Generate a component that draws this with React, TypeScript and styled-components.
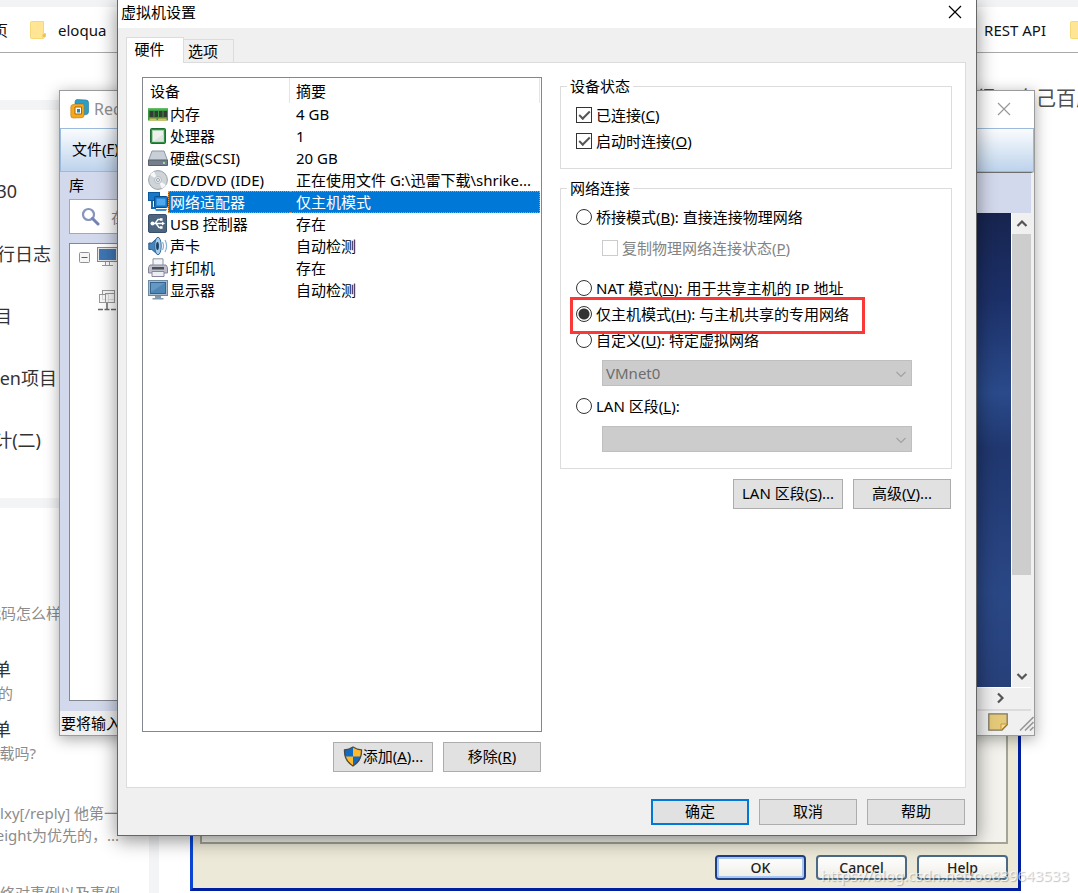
import React from "react";
import styled, { createGlobalStyle, css } from "styled-components";

const GlobalStyle = createGlobalStyle`
  *, *::before, *::after { box-sizing: border-box; }
  body { margin: 0; background: #fff; }
  body, button, input, select {
    font-family: "Noto Sans", "Noto Sans CJK SC", sans-serif;
    font-size: 15px;
    color: #000;
  }
`;

/* ---------- desktop and the web page at the back ---------- */

const Desktop = styled.main`
  position: relative;
  height: 100vh;
  min-height: 836px;
  overflow: hidden;
  display: flex;
  flex-direction: column;
`;

const BookmarkBar = styled.nav`
  flex: none;
  display: flex;
  justify-content: space-between;
  align-items: center;
  height: 53px;
  padding-top: 6px;
  padding-bottom: 6px;
  border-top: 7px solid #f1f3f4;
  border-bottom: 1px solid #a9a9a9;
  background: #fff;
`;

const BookmarkGroup = styled.div<{ $end?: boolean }>`
  display: flex;
  align-items: center;
  gap: ${(p) => (p.$end ? 24 : 22)}px;
  margin: ${(p) => (p.$end ? "0 -8px 0 0" : "0 0 0 -7px")};
`;

const Bookmark = styled.a`
  display: flex;
  align-items: center;
  gap: 12px;
  line-height: 20px;
  color: #111;
  text-decoration: none;
  white-space: nowrap;
`;

const WebPage = styled.div`
  flex: 1;
  min-height: 0;
  display: flex;
`;

const Sidebar = styled.aside`
  flex: none;
  width: 159px;
  border-right: 10px solid #f3f4f6;
  overflow: hidden;
`;

const SideCard = styled.section<{ $pad: number }>`
  padding-top: ${(p) => p.$pad}px;
  border-top: 10px solid #f3f4f6;
  &:first-child { margin-top: 47px; }
`;

const SideLink = styled.a<{ $end: number }>`
  display: flex;
  justify-content: flex-end;
  align-items: center;
  width: ${(p) => p.$end}px;
  height: 62px;
  font-size: 18px;
  color: #333;
  text-decoration: none;
  white-space: nowrap;
`;

const Comment = styled.div<{ $gap?: number }>`
  padding-bottom: ${(p) => p.$gap ?? 12}px;
`;

const CommentLine = styled.p<{ $end: number; $title?: boolean }>`
  display: flex;
  justify-content: flex-end;
  margin: 0;
  width: ${(p) => p.$end}px;
  line-height: ${(p) => (p.$title ? 26 : 22)}px;
  font-size: ${(p) => (p.$title ? 18 : 15)}px;
  color: ${(p) => (p.$title ? "#333" : "#8c8c8c")};
  white-space: nowrap;
`;

const Article = styled.article`
  flex: 1;
  min-width: 0;
  display: flex;
  flex-direction: column;
  padding: 31px 57px 2px 31px;
`;

const ArticleText = styled.p`
  align-self: flex-end;
  margin: 0 -75px 0 0;
  line-height: 30px;
  font-size: 20px;
  color: #4f4f4f;
  white-space: nowrap;
`;

const OldDialog = styled.div`
  flex: 1;
  display: flex;
  flex-direction: column;
  margin-top: 20px;
  padding: 0 10px 8px 7px;
  border: 3px solid #001ea0;
  border-color: #0a3cc8 #001ea0 #001ea0 #0a46d2;
  background: #ece9d8;
`;

const OldPanel = styled.div`
  flex: 1;
  border: 2px solid #a3a397;
  border-top: 0;
  background: #f3f2ec;
`;

const OldButtons = styled.div`
  display: flex;
  justify-content: flex-end;
  gap: 10px;
  padding-top: 11px;
`;

const OldButton = styled.button<{ $primary?: boolean }>`
  width: 91px;
  height: 25px;
  padding: 0;
  border: 2px solid ${(p) => (p.$primary ? "#1f3f86" : "#4c6a85")};
  border-radius: 4px;
  background: linear-gradient(#fff, #eeede6);
  box-shadow: ${(p) => (p.$primary ? "inset 0 0 0 2px #a9c6f3" : "none")};
  font: 500 14px/18px "Noto Sans", sans-serif;
  color: #222;
`;

const Watermark = styled.span`
  position: absolute;
  right: 9px;
  bottom: 7px;
  font-size: 15px;
  line-height: 22px;
  color: rgba(255, 255, 255, 0.7);
  text-shadow: 1px 1px 1px rgba(0, 0, 0, 0.25);
`;

/* ---------- virtual machine window ---------- */

const VmWindow = styled.section`
  position: absolute;
  top: 90px;
  left: 59px;
  right: 43px;
  display: flex;
  flex-direction: column;
  border: 1px solid #9b9b9b;
  background: #f0f0f0;
  box-shadow: 0 3px 14px rgba(0, 0, 0, 0.35);
`;

const VmTitle = styled.header`
  display: flex;
  align-items: center;
  gap: 5px;
  height: 37px;
  padding: 0 23px 2px 10px;
  background: #fff;
  font-size: 16px;
  color: #8f8f8f;
`;

const PlainButton = styled.button`
  display: flex;
  padding: 0;
  border: 0;
  background: none;
`;

const Grow = styled.span`
  flex: 1;
`;

const VmMenu = styled.div`
  display: flex;
  align-items: center;
  height: 44px;
  padding: 0 0 4px 11px;
  border: 1px solid #9cbbdc;
  background: linear-gradient(#fafcfe, #bdd3ec);
`;

const VmBody = styled.div`
  display: flex;
  height: 539px;
  background: #d3d9ec;
`;

const Library = styled.div`
  flex: none;
  display: flex;
  flex-direction: column;
  width: 200px;
  padding: 0 0 10px 9px;
`;

const LibraryTitle = styled.h2`
  margin: 0;
  height: 27px;
  font-size: 15px;
  line-height: 26px;
  font-weight: 400;
`;

const SearchBox = styled.label`
  display: flex;
  align-items: center;
  gap: 11px;
  height: 35px;
  padding-left: 11px;
  border: 1px solid #a5a8b3;
  background: #fff;
  input {
    flex: 1;
    min-width: 0;
    padding: 0;
    border: 0;
    outline: 0;
  }
  input::placeholder { color: #8a8a8a; }
`;

const Tree = styled.ul`
  flex: 1;
  margin: 9px 0 0;
  padding: 2px 0 0 9px;
  list-style: none;
  border: 1px solid #828790;
  background: #fff;
  li {
    display: flex;
    align-items: center;
    gap: 7px;
    height: 22px;
  }
  li + li {
    margin-top: 21px;
    padding-left: 19px;
  }
`;

const Screen = styled.div`
  flex: 1;
  display: flex;
  flex-direction: column;
  border-top: 1px solid #6e6e6e;
  border-right: 3px solid #f0f0f0;
`;

const ScreenRow = styled.div`
  flex: 1;
  display: flex;
  margin-top: 40px;
`;

const GuestDisplay = styled.div`
  flex: 1;
  border-right: 1px solid #fff;
  background: linear-gradient(#17244f 0, #1c3068 18%, #2a4a8a 38%, #20376f 50%, #2a4785 80%, #27407a 100%);
`;

const VScroll = styled.div`
  display: flex;
  flex-direction: column;
  align-items: center;
  justify-content: space-between;
  width: 19px;
  padding: 5px 0;
  background: #f0f0f0;
`;

const Thumb = styled.div`
  width: 19px;
  height: 341px;
  margin: 4px 0 auto;
  background: #cdcdcd;
`;

const HScroll = styled.div`
  display: flex;
  justify-content: flex-end;
  align-items: center;
  height: 24px;
  padding: 0 25px 2px 0;
  border-top: 1px solid #fff;
  border-bottom: 2px solid #dcdcdc;
  background: #f0f0f0;
`;

const VmStatus = styled.footer`
  display: flex;
  align-items: center;
  justify-content: space-between;
  height: 24px;
  padding: 0 0 2px 1px;
`;

const StatusIcons = styled.div`
  display: flex;
  align-items: flex-end;
  gap: 11px;
`;

/* ---------- settings dialog ---------- */

const Dialog = styled.section`
  position: absolute;
  top: 0;
  left: 117px;
  right: 101px;
  display: flex;
  flex-direction: column;
  border: 1px solid #666;
  border-top: 0;
  background: #f0f0f0;
  box-shadow: 0 4px 18px rgba(0, 0, 0, 0.45);
`;

const DialogTitle = styled.header`
  display: flex;
  align-items: center;
  justify-content: space-between;
  height: 28px;
  padding: 0 14px 5px 3px;
  background: #fff;
  h1 {
    margin: 0;
    font-size: 15px;
    line-height: 22px;
    font-weight: 400;
  }
`;

const TabStrip = styled.div`
  display: flex;
  align-items: flex-end;
  height: 34px;
  padding-left: 8px;
`;

const Tab = styled.button<{ $active?: boolean }>`
  padding: 0 11px 1px 0;
  border: 1px solid #dcdcdc;
  border-bottom: 0;
  line-height: 20px;
  ${(p) =>
    p.$active
      ? css`
          z-index: 1;
          width: 58px;
          height: 26px;
          margin-bottom: -1px;
          padding-bottom: 4px;
          background: #fff;
        `
      : css`
          width: 50px;
          height: 23px;
          border-left: 0;
          background: #f0f0f0;
        `}
`;

const TabPanel = styled.div`
  display: flex;
  gap: 18px;
  margin: 0 10px 0 8px;
  padding: 14px 13px 15px 15px;
  border: 1px solid #dcdcdc;
  background: #fff;
`;

const DeviceColumn = styled.div`
  flex: 400 1 0;
  min-width: 0;
`;

const OptionColumn = styled.div`
  flex: 392 1 0;
  min-width: 0;
`;

const DeviceList = styled.div`
  min-height: 655px;
  padding-right: 1px;
  border: 1px solid #828790;
  background: #fff;
`;

const DeviceTable = styled.table`
  width: 100%;
  table-layout: fixed;
  border-collapse: separate;
  border-spacing: 0;
  th {
    height: 25px;
    padding: 1px 0 0 7px;
    border-right: 1px solid #e5e5e5;
    font-weight: 400;
    text-align: left;
    line-height: 24px;
  }
  th + th { padding-left: 6px; }
`;

const DeviceRow = styled.tr<{ $selected?: boolean }>`
  color: ${(p) => (p.$selected ? "#fff" : "#000")};
  td {
    height: 22px;
    padding: 0;
    line-height: 20px;
    white-space: nowrap;
    overflow: hidden;
    border: 0 solid transparent;
    border-width: 1px 0;
  }
  td:first-child {
    padding: 0 0 0 5px;
    border-width: 0;
  }
  td:first-child svg { display: block; }
  td:nth-child(2) { padding-left: 2px; }
  td:nth-child(3) { padding-left: 6px; }
  ${(p) =>
    p.$selected &&
    css`
      td:not(:first-child) {
        background: #0078d7;
        border-color: #f09030;
        border-style: dotted;
      }
      td:nth-child(2) { border-left-width: 1px; padding-left: 1px; }
      td:nth-child(3) { border-right-width: 1px; }
    `}
`;

const ButtonRow = styled.div`
  display: flex;
  justify-content: flex-end;
  gap: 10px;
  padding: 10px 1px 0 0;
`;

const DialogFooter = styled.footer`
  display: flex;
  justify-content: flex-end;
  gap: 10px;
  padding: 11px 11px 10px;
`;

const Button = styled.button<{ $width?: number; $primary?: boolean; $short?: boolean }>`
  display: flex;
  align-items: center;
  justify-content: center;
  width: ${(p) => p.$width ?? 98}px;
  height: ${(p) => (p.$short ? 26 : 30)}px;
  padding: 0 0 2px;
  border: ${(p) => (p.$primary ? "2px solid #0078d7" : "1px solid #adadad")};
  background: #e1e1e1;
  line-height: 20px;
  white-space: nowrap;
`;

const Group = styled.fieldset`
  min-width: 0;
  margin: 0;
  padding: 7px 15px 14px;
  border: 1px solid #dcdcdc;
  & + & { margin-top: 10px; padding-bottom: 16px; }
  legend {
    margin-left: -9px;
    padding: 0 3px;
    line-height: 18px;
  }
`;

const Choice = styled.label<{ $marked?: boolean; $disabled?: boolean }>`
  position: relative;
  display: flex;
  align-items: center;
  gap: 4px;
  width: max-content;
  height: 26px;
  white-space: nowrap;
  color: ${(p) => (p.$disabled ? "#838383" : "#000")};
  span { padding-bottom: 2px; }
  ${(p) =>
    p.$disabled &&
    css`
      margin: 5px 0 14px 26px;
    `}
  ${(p) =>
    p.$marked &&
    css`
      z-index: 1;
      &::after {
        content: "";
        position: absolute;
        inset: -4px -16px -7px -6px;
        border: 3px solid #fa3838;
      }
    `}
`;

const CheckBox = styled.input`
  appearance: none;
  display: grid;
  place-items: center;
  width: 16px;
  height: 16px;
  margin: 0;
  border: 1px solid #333;
  background: #fff;
  &:checked::after {
    content: "";
    width: 11px;
    height: 6px;
    margin-bottom: 3px;
    border: solid #555;
    border-width: 0 0 2px 2px;
    transform: rotate(-45deg);
  }
  &:disabled { border-color: #ccc; }
`;

const Radio = styled.input`
  appearance: none;
  width: 16px;
  height: 16px;
  margin: 0;
  border: 1px solid #333;
  border-radius: 50%;
  background: #fff;
  &:checked { background: radial-gradient(circle, #333 5px, #fff 6px); }
`;

const SelectBox = styled.div`
  position: relative;
  margin: 7px 24px 7px 26px;
  &:last-child { margin-bottom: 0; }
  select {
    display: block;
    appearance: none;
    width: 100%;
    height: 26px;
    padding: 0 3px;
    border: 1px solid #bfbfbf;
    border-radius: 0;
    background: #ccc;
    color: #6d6d6d;
    opacity: 1;
  }
  svg {
    position: absolute;
    top: 8px;
    right: 5px;
  }
`;

/* ---------- icons ---------- */

const Folder = () => (
  <svg width="16" height="18" viewBox="0 0 16 18">
    <path d="M1.5.5h12v12h2v3l-2 2h-12a1 1 0 0 1-1-1v-15a1 1 0 0 1 1-1z" fill="#ffe594" stroke="#f5d877" />
    <path d="M12.500 16.500v-3l3-1v3z" fill="#edc24f" />
  </svg>
);

const Cross = ({ color = "#000" }: { color?: string }) => (
  <svg width="14" height="14" viewBox="0 0 14 14">
    <path d="M1 1l12 12M13 1L1 13" stroke={color} strokeWidth="1.2" fill="none" />
  </svg>
);

const Chevron = ({ turn, thin }: { turn: number; thin?: boolean }) => (
  <svg width={12} height={12} viewBox="0 0 12 12">
    <path
      d="M1.500 4L6 8.500 10.500 4"
      transform={`rotate(${turn} 6 6)`}
      stroke={thin ? "#a0a0a0" : "#555"}
      strokeWidth={thin ? 1.1 : 2.2}
      fill="none"
    />
  </svg>
);

const VmLogo = () => (
  <svg width="19" height="20" viewBox="0 0 19 20">
    <path d="M5 3q0-2.500 2-2.500L16 1q2.500 0 2.500 2.500V13q0 2-2 2.500l-3 .5V5H5z" fill="#2e9dc4" stroke="#1c7799" strokeWidth=".6" />
    <path d="M3 5.500l9-.5q2 0 2 2v9.500q0 2-2 2.200L3 19Q.8 19 .8 16.500V8Q.8 5.800 3 5.500z" fill="#f5a81c" stroke="#b8740c" strokeWidth=".6" />
    <path d="M5 8h6.500v7H5z" fill="#fff" stroke="#a3680b" />
    <path d="M7 10h3v3.500H7z" fill="#2583a8" />
  </svg>
);

const SearchIcon = () => (
  <svg width="19" height="19" viewBox="0 0 19 19">
    <circle cx="7.500" cy="7.500" r="5.500" fill="none" stroke="#8593bd" strokeWidth="2.200" />
    <path d="M11.500 11.500l5.500 5.500" stroke="#7483b3" strokeWidth="3" strokeLinecap="round" />
  </svg>
);

const MinusBox = () => (
  <svg width="11" height="11" viewBox="0 0 11 11">
    <rect x=".5" y=".5" width="10" height="10" rx="1" fill="#f6f6f6" stroke="#919191" />
    <path d="M2.500 5.500h6" stroke="#3f5fa8" />
  </svg>
);

const TreeMonitor = () => (
  <svg width="22" height="20" viewBox="0 0 22 20">
    <rect x=".5" y=".5" width="20" height="14" fill="#e8e8e8" stroke="#888" />
    <rect x="2" y="2" width="17" height="11" fill="#3f76b5" />
    <path d="M8.500 15v3M12.500 15v3M5 18.500h11" stroke="#999" fill="none" />
  </svg>
);

const TreeNetwork = () => (
  <svg width="20" height="22" viewBox="0 0 20 22">
    <g fill="#fafafa" fillOpacity=".7" stroke="#999">
      <rect x="4.500" y="1.500" width="12" height="9" />
      <rect x="1.500" y="5.500" width="9" height="8" />
      <rect x="7.500" y="4.500" width="9" height="9" />
    </g>
    <path d="M9 14v6M0 20.500h5M6.500 20.500h5M13 20.500h5" stroke="#666" strokeWidth="1.500" fill="none" />
  </svg>
);

const Note = () => (
  <svg width="20" height="18" viewBox="0 0 20 18">
    <path d="M.8.8h18.400v11L14 17.200H.8z" fill="#e5c97a" stroke="#7d7864" strokeWidth="1.300" />
    <path d="M13 17v-6h6z" fill="#f4dc9a" stroke="#c49738" />
  </svg>
);

const Grip = () => (
  <svg width="15" height="15" viewBox="0 0 15 15">
    <path d="M1 14.500L14.500 1M6 14.500L14.500 6M11 14.500l3.500-3.500" stroke="#999" strokeWidth="1.600" />
  </svg>
);

const Shield = () => (
  <svg width="20" height="21" viewBox="0 0 20 21">
    <path d="M10 1Q6 3.500 1.500 3.800 1 14.500 10 20z" fill="#0f6cc4" />
    <path d="M10 1q4 2.500 8.500 2.800Q19 14.500 10 20z" fill="#ffb92b" />
    <path d="M10 10.500H2Q3.500 16.500 10 20z" fill="#ffb92b" />
    <path d="M10 10.500h8Q16.500 16.500 10 20z" fill="#0f6cc4" />
    <path d="M10 1q4 2.500 8.500 2.800Q19 14.500 10 20 1 14.500 1.500 3.800 6 3.500 10 1z" fill="none" stroke="#4b4b4b" strokeWidth="1.300" />
  </svg>
);

type DeviceKind = "ram" | "cpu" | "disk" | "cd" | "net" | "usb" | "sound" | "printer" | "display";

const deviceArt: Record<DeviceKind, React.ReactNode> = {
  ram: (
    <>
      <path d="M0 4h20v12.500H0z" fill="#3d9a45" />
      <path d="M0 4h20v1.500H0z" fill="#67bd6a" />
      <path d="M1.500 7h4v6h-4zM6.500 7H10v6H6.500zM11 7h3.500v6H11zM15.500 7h3.500v6h-3.500z" fill="#333c35" />
      <path d="M1.500 15.500h7M10 15.500h8.500" stroke="#f0b64d" strokeWidth="1.800" />
    </>
  ),
  cpu: (
    <>
      <rect x="2.500" y="2.500" width="15" height="15" rx="1" fill="#2f8f42" stroke="#1f6e31" />
      <rect x="4.500" y="4.500" width="11" height="11" fill="#eef0ee" stroke="#a9d3ae" />
      <path d="M5 15.500h10.500V8z" fill="#dfe3e0" />
    </>
  ),
  disk: (
    <>
      <path d="M4 3h12l3.500 9.500H.5z" fill="#c9cfd7" stroke="#8e98a4" />
      <path d="M.5 12h19v5.500H.5z" fill="#737f8c" stroke="#55606b" />
      <path d="M15 15h2" stroke="#b6f5b6" strokeWidth="1.500" />
    </>
  ),
  cd: (
    <>
      <circle cx="10" cy="10" r="9.400" fill="#cfd4d9" stroke="#9aa2aa" />
      <path d="M10 10L2 5a9.400 9.400 0 0 1 4-3.500zM10 10l8 5a9.400 9.400 0 0 1-4 3.500z" fill="#f6f8fa" />
      <circle cx="10" cy="10" r="3.500" fill="#e9ecef" stroke="#b5bcc4" />
      <circle cx="10" cy="10" r="1.500" fill="#fff" stroke="#98a2ac" />
    </>
  ),
  net: (
    <>
      <rect x=".5" y=".5" width="11" height="8" fill="#1a78c8" stroke="#0b5a9e" />
      <path d="M4 9v7h4" fill="none" stroke="#1a6bb0" strokeWidth="2" />
      <rect x="6.500" y="4.500" width="13" height="11" rx="1" fill="#1372c4" stroke="#084f91" />
      <rect x="8.500" y="6.500" width="9" height="7" fill="#4da8ec" />
      <path d="M7 17h12l-1 2H8z" fill="#3d8fd0" />
    </>
  ),
  usb: (
    <>
      <rect x=".5" y=".5" width="18" height="18" rx="1.500" fill="#4c6580" stroke="#38506a" />
      <path d="M4 9.500h11M7 9.500l3-4h3M8 9.500l3 4h2" fill="none" stroke="#fff" strokeWidth="1.300" />
      <circle cx="4.500" cy="9.500" r="2" fill="#fff" />
      <path d="M14 7.500l3 2-3 2zM12 4.200h2.600v2.600H12zM12 12.200h2.600v2.600H12z" fill="#fff" />
    </>
  ),
  sound: (
    <>
      <path d="M.8 7h3L10 1.200v17.600L3.800 13.500h-3z" fill="#4585bd" stroke="#2d5f8d" />
      <ellipse cx="10" cy="10" rx="3.200" ry="8.800" fill="#a7cdea" stroke="#3a6d9b" />
      <ellipse cx="9.500" cy="10" rx="1.400" ry="4" fill="#1d3f66" />
      <path d="M14.500 6q2 4 0 8M17 4q3.200 6 0 12" fill="none" stroke="#8bb0d1" strokeWidth="1.200" />
    </>
  ),
  printer: (
    <>
      <path d="M5 .8h10V8H5z" fill="#f3f5f8" stroke="#8e949d" />
      <path d="M2 7h16l1.500 2.500V15H.5V9.500z" fill="#bdbfcb" stroke="#84879a" />
      <path d="M4 9h12v2.500H4z" fill="#4d4f5a" />
      <path d="M4 13.500h12v5H4z" fill="#eceef4" stroke="#85889c" />
    </>
  ),
  display: (
    <>
      <rect x=".5" y=".5" width="19" height="15" fill="#a9bccb" stroke="#6d8aa3" />
      <rect x="2.500" y="2.500" width="15" height="11" fill="#4f86b6" stroke="#35648f" />
      <path d="M3 3h14L3 12z" fill="#6598c3" />
      <path d="M7 16h6v2H7zM4.500 18h11v1.500h-11z" fill="#8298ab" />
    </>
  ),
};

const DeviceIcon = ({ kind }: { kind: DeviceKind }) => (
  <svg width="20" height="20" viewBox="0 0 20 20">{deviceArt[kind]}</svg>
);

/* ---------- data ---------- */

const devices: { kind: DeviceKind; name: string; summary: string }[] = [
  { kind: "ram", name: "内存", summary: "4 GB" },
  { kind: "cpu", name: "处理器", summary: "1" },
  { kind: "disk", name: "硬盘(SCSI)", summary: "20 GB" },
  { kind: "cd", name: "CD/DVD (IDE)", summary: "正在使用文件 G:\\迅雷下载\\shrike..." },
  { kind: "net", name: "网络适配器", summary: "仅主机模式" },
  { kind: "usb", name: "USB 控制器", summary: "存在" },
  { kind: "sound", name: "声卡", summary: "自动检测" },
  { kind: "printer", name: "打印机", summary: "存在" },
  { kind: "display", name: "显示器", summary: "自动检测" },
];

const sideLinks = [
  { text: "30", end: 17 },
  { text: "行日志", end: 51 },
  { text: "目", end: 12 },
  { text: "ven项目", end: 57 },
  { text: "计(二)", end: 41 },
];

export default function App() {
  return (
    <>
      <GlobalStyle />
      <Desktop>
        <BookmarkBar>
          <BookmarkGroup>
            <Bookmark href="#">页</Bookmark>
            <Bookmark href="#"><Folder />eloqua</Bookmark>
          </BookmarkGroup>
          <BookmarkGroup $end>
            <Bookmark href="#">REST API</Bookmark>
            <Bookmark href="#" aria-label="folder"><Folder /></Bookmark>
          </BookmarkGroup>
        </BookmarkBar>

        <WebPage>
          <Sidebar>
            <SideCard $pad={50}>
              <Comment $gap={28}>
                {sideLinks.map((l) => (
                  <SideLink key={l.text} href="#" $end={l.end}>{l.text}</SideLink>
                ))}
              </Comment>
            </SideCard>
            <SideCard $pad={94}>
              <Comment $gap={32}>
                <CommentLine $end={61}>代码怎么样</CommentLine>
              </Comment>
              <Comment>
                <CommentLine $title $end={11}>单</CommentLine>
                <CommentLine $end={13}>的</CommentLine>
              </Comment>
              <Comment $gap={38}>
                <CommentLine $title $end={11}>单</CommentLine>
                <CommentLine $end={36}>载吗?</CommentLine>
              </Comment>
              <Comment $gap={36}>
                <CommentLine $end={119}>lxy[/reply] 他第一</CommentLine>
                <CommentLine $end={119}>eight为优先的，...</CommentLine>
              </Comment>
              <CommentLine $end={120}>络对事例以及事例</CommentLine>
            </SideCard>
          </Sidebar>
          <Article>
            <ArticleText>得、自己百度</ArticleText>
            <OldDialog>
              <OldPanel />
              <OldButtons>
                <OldButton $primary>OK</OldButton>
                <OldButton>Cancel</OldButton>
                <OldButton>Help</OldButton>
              </OldButtons>
            </OldDialog>
          </Article>
        </WebPage>

        <VmWindow>
          <VmTitle>
            <VmLogo />Red
            <Grow />
            <PlainButton aria-label="close window"><Cross color="#999" /></PlainButton>
          </VmTitle>
          <VmMenu>
            <PlainButton>文件(<u>F</u>)</PlainButton>
          </VmMenu>
          <VmBody>
            <Library>
              <LibraryTitle>库</LibraryTitle>
              <SearchBox>
                <SearchIcon />
                <input type="text" placeholder="在" aria-label="search" />
              </SearchBox>
              <Tree>
                <li><MinusBox /><TreeMonitor /></li>
                <li><TreeNetwork /></li>
              </Tree>
            </Library>
            <Screen>
              <ScreenRow>
                <GuestDisplay />
                <VScroll>
                  <Chevron turn={180} />
                  <Thumb />
                  <Chevron turn={0} />
                </VScroll>
              </ScreenRow>
              <HScroll><Chevron turn={-90} /></HScroll>
            </Screen>
          </VmBody>
          <VmStatus>
            <span>要将输入</span>
            <StatusIcons><Note /><Grip /></StatusIcons>
          </VmStatus>
        </VmWindow>

        <Dialog role="dialog" aria-labelledby="dialog-title">
          <DialogTitle>
            <h1 id="dialog-title">虚拟机设置</h1>
            <PlainButton aria-label="close"><Cross /></PlainButton>
          </DialogTitle>
          <TabStrip role="tablist">
            <Tab role="tab" $active>硬件</Tab>
            <Tab role="tab">选项</Tab>
          </TabStrip>
          <TabPanel role="tabpanel">
            <DeviceColumn>
              <DeviceList>
                <DeviceTable>
                  <colgroup>
                    <col width="25" />
                    <col width="122" />
                    <col />
                  </colgroup>
                  <thead>
                    <tr>
                      <th colSpan={2}>设备</th>
                      <th>摘要</th>
                    </tr>
                  </thead>
                  <tbody>
                    {devices.map((d) => (
                      <DeviceRow key={d.kind} $selected={d.kind === "net"}>
                        <td><DeviceIcon kind={d.kind} /></td>
                        <td>{d.name}</td>
                        <td>{d.summary}</td>
                      </DeviceRow>
                    ))}
                  </tbody>
                </DeviceTable>
              </DeviceList>
              <ButtonRow>
                <Button $width={100}><Shield />添加(<u>A</u>)...</Button>
                <Button>移除(<u>R</u>)</Button>
              </ButtonRow>
            </DeviceColumn>

            <OptionColumn>
              <Group>
                <legend>设备状态</legend>
                <Choice><CheckBox type="checkbox" defaultChecked /><span>已连接(<u>C</u>)</span></Choice>
                <Choice><CheckBox type="checkbox" defaultChecked /><span>启动时连接(<u>O</u>)</span></Choice>
              </Group>
              <Group>
                <legend>网络连接</legend>
                <Choice><Radio type="radio" name="net" /><span>桥接模式(<u>B</u>): 直接连接物理网络</span></Choice>
                <Choice $disabled><CheckBox type="checkbox" disabled /><span>复制物理网络连接状态(<u>P</u>)</span></Choice>
                <Choice><Radio type="radio" name="net" /><span>NAT 模式(<u>N</u>): 用于共享主机的 IP 地址</span></Choice>
                <Choice $marked><Radio type="radio" name="net" defaultChecked /><span>仅主机模式(<u>H</u>): 与主机共享的专用网络</span></Choice>
                <Choice><Radio type="radio" name="net" /><span>自定义(<u>U</u>): 特定虚拟网络</span></Choice>
                <SelectBox>
                  <select disabled aria-label="VMnet"><option>VMnet0</option></select>
                  <Chevron turn={0} thin />
                </SelectBox>
                <Choice><Radio type="radio" name="net" /><span>LAN 区段(<u>L</u>):</span></Choice>
                <SelectBox>
                  <select disabled aria-label="LAN" />
                  <Chevron turn={0} thin />
                </SelectBox>
              </Group>
              <ButtonRow>
                <Button $width={110}>LAN 区段(<u>S</u>)...</Button>
                <Button>高级(<u>V</u>)...</Button>
              </ButtonRow>
            </OptionColumn>
          </TabPanel>
          <DialogFooter>
            <Button $short $primary>确定</Button>
            <Button $short>取消</Button>
            <Button $short>帮助</Button>
          </DialogFooter>
        </Dialog>

        <Watermark>https://blog.csdn.net/oo839643533</Watermark>
      </Desktop>
    </>
  );
}
